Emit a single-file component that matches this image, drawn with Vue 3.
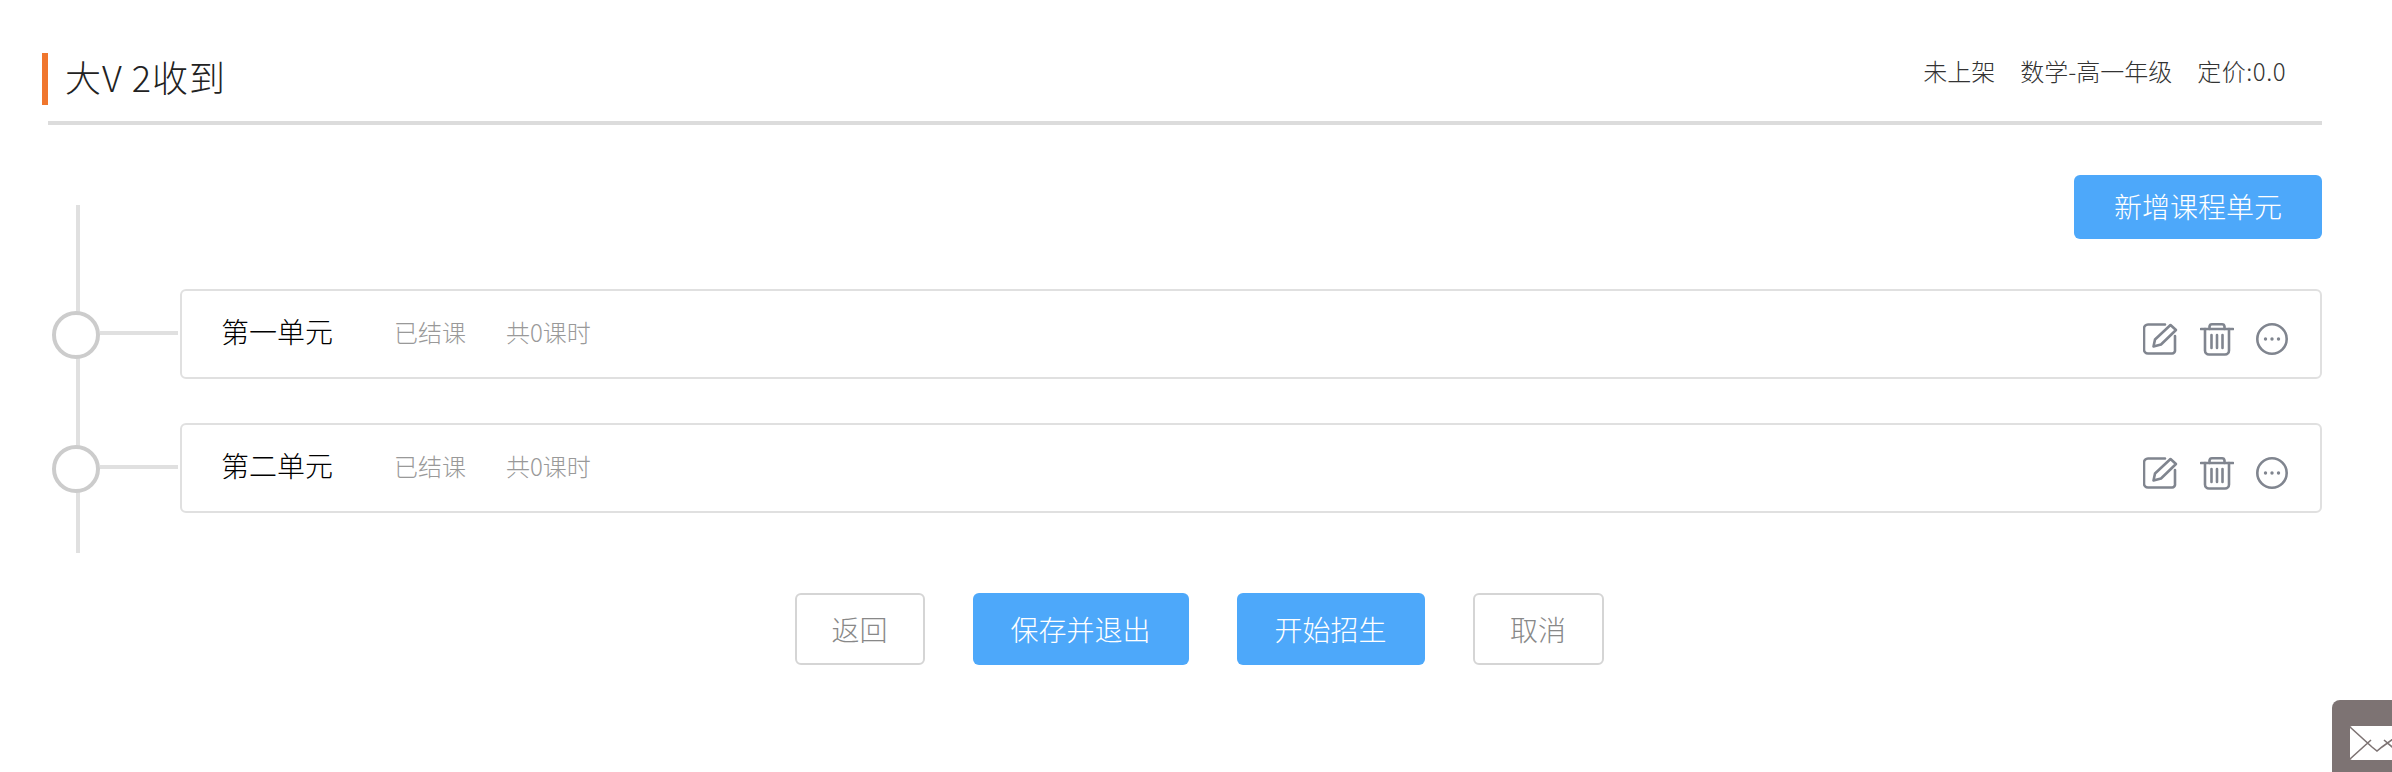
<template>
  <div class="pagina">
    <header class="cabecera">
      <h1 class="titulo">大V 2收到</h1>
      <div class="meta">
        <span>未上架</span>
        <span>数学-高一年级</span>
        <span class="precio">定价:0.0</span>
      </div>
    </header>

    <section class="cuerpo">
      <div class="riel"></div>
      <div class="acciones-top">
        <button class="boton primario nuevo">新增课程单元</button>
      </div>
      <div v-for="unidad in unidades" :key="unidad" class="fila">
        <span class="nodo"></span>
        <span class="conector"></span>
        <div class="tarjeta">
          <span class="nombre">{{ unidad }}</span>
          <span class="dato estado">已结课</span>
          <span class="dato">共0课时</span>
          <div class="iconos">
            <svg width="35" height="32" viewBox="0 0 35 32" fill="none" stroke="#80858f" stroke-width="2.6" stroke-linecap="round" stroke-linejoin="round">
              <path d="M22 1.500H5a4 4 0 0 0-4 4V26.500a4 4 0 0 0 4 4h24a3 3 0 0 0 3-3.500V13" />
              <path d="M10.500 23.500l1.500-7L27.500 2l5.500 5L18 21.500z" />
            </svg>
            <svg width="34" height="33" viewBox="0 0 34 33" fill="none" stroke="#80858f" stroke-width="2.6" stroke-linecap="round" stroke-linejoin="round">
              <path d="M1 6h32" />
              <path d="M9.500 6V3.500A2.500 2.500 0 0 1 12 1.300h10a2.500 2.500 0 0 1 2.500 2.200V6" />
              <path d="M5 6v21.500a4 4 0 0 0 4 4h16a4 4 0 0 0 4-4V6" />
              <path d="M11.500 12v13M17 12v13M22.500 12v13" />
            </svg>
            <svg width="32" height="32" viewBox="0 0 32 32" fill="none">
              <circle cx="16" cy="16" r="14.700" stroke="#80858f" stroke-width="2.600" />
              <circle cx="9.500" cy="16" r="1.700" fill="#80858f" />
              <circle cx="16" cy="16" r="1.700" fill="#80858f" />
              <circle cx="22.500" cy="16" r="1.700" fill="#80858f" />
            </svg>
          </div>
        </div>
      </div>
    </section>

    <footer class="pie">
      <button class="boton secundario volver">返回</button>
      <button class="boton primario guardar">保存并退出</button>
      <button class="boton primario iniciar">开始招生</button>
      <button class="boton secundario cancelar">取消</button>
    </footer>

    <div class="correo">
      <svg width="60" height="34" viewBox="0 0 60 34">
        <rect x="0" y="0" width="60" height="34" rx="2" fill="#fff" />
        <path d="M0 1l22 20 5 4 5-4L60 1M0 33l21-19M34 14l22 19" fill="none" stroke="#7d7373" stroke-width="1.600" />
      </svg>
    </div>
  </div>
</template>

<script setup>
const unidades = ['第一单元', '第二单元']
</script>

<style>
html,
body {
  margin: 0;
  background: #fff;
}
</style>

<style scoped>
.pagina {
  position: relative;
  height: 772px;
  overflow: hidden;
  padding: 53px 70px 0 48px;
  box-sizing: border-box;
  font-family: "Noto Sans CJK SC", "Liberation Sans", sans-serif;
  font-weight: 300;
}
.cabecera {
  display: flex;
  justify-content: space-between;
  align-items: flex-start;
  height: 68px;
  border-bottom: 4px solid #dcdcdc;
}
.titulo {
  margin: 0 0 0 -6px;
  height: 52px;
  padding-left: 17px;
  border-left: 6px solid #f0762d;
  font-size: 36px;
  line-height: 46px;
  letter-spacing: 1px;
  font-weight: 300;
  color: #222;
}
.meta {
  display: flex;
  gap: 25px;
  padding-right: 36px;
  font-size: 24px;
  line-height: 32px;
  margin-top: 2px;
  color: #333;
}
.precio {
  letter-spacing: 0.5px;
}
.cuerpo {
  position: relative;
  padding-top: 50px;
}
.riel {
  position: absolute;
  left: 28px;
  top: 80px;
  width: 4px;
  height: 348px;
  background: #e0e0e0;
}
.acciones-top {
  display: flex;
  justify-content: flex-end;
  margin-bottom: 50px;
}
.boton {
  box-sizing: border-box;
  padding: 0;
  font-family: inherit;
  font-weight: 300;
  font-size: 28px;
  border-radius: 6px;
  cursor: pointer;
}
.primario {
  border: 0;
  background: #4da8fa;
  color: #fff;
}
.secundario {
  border: 2px solid #d5d5d5;
  background: #fff;
  color: #888;
}
.nuevo {
  width: 248px;
  height: 64px;
  padding-bottom: 2px;
}
.fila {
  position: relative;
  display: flex;
  align-items: center;
  height: 90px;
  margin-bottom: 44px;
  padding-left: 4px;
}
.nodo {
  box-sizing: border-box;
  flex: none;
  width: 48px;
  height: 48px;
  margin-top: 2px;
  border: 4px solid #ccc;
  border-radius: 50%;
  background: #fff;
}
.conector {
  flex: none;
  width: 78px;
  height: 4px;
  margin: 0 2px 2px 0;
  background: #e0e0e0;
}
.tarjeta {
  box-sizing: border-box;
  flex: 1;
  display: flex;
  align-items: center;
  height: 90px;
  padding: 0 32px 0 39px;
  border: 2px solid #e0e0e0;
  border-radius: 6px;
  background: #fff;
}
.nombre {
  width: 173px;
  font-size: 28px;
  line-height: 36px;
  color: #000;
  margin-top: -6px;
}
.dato {
  font-size: 24px;
  line-height: 32px;
  color: #999;
  margin-top: -4px;
}
.estado {
  margin-right: 40px;
}
.iconos {
  margin-left: auto;
  display: flex;
  align-items: center;
  gap: 22px;
  margin-top: 10px;
}
.pie {
  display: flex;
  justify-content: center;
  gap: 48px;
  margin-top: 80px;
  padding-left: 28px;
}
.pie .boton {
  height: 72px;
}
.volver {
  width: 130px;
}
.guardar {
  width: 216px;
}
.iniciar {
  width: 188px;
}
.cancelar {
  width: 131px;
}
.correo {
  position: absolute;
  left: 2332px;
  top: 700px;
  width: 90px;
  height: 90px;
  padding: 26px 0 0 18px;
  box-sizing: border-box;
  background: #7d7373;
  border-radius: 8px 0 0 0;
}
.correo svg {
  display: block;
}
</style>
